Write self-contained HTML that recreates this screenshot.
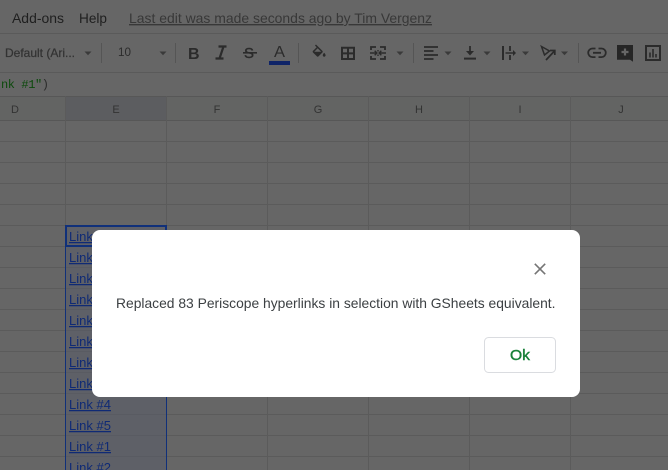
<!DOCTYPE html>
<html>
<head>
<meta charset="utf-8">
<style>
html,body{margin:0;padding:0;width:668px;height:470px;overflow:hidden;background:#666}
svg{display:block;position:absolute;left:0;top:0}
text{font-family:"Liberation Sans",sans-serif}
</style>
</head>
<body>
<svg width="668" height="470" viewBox="0 0 668 470" xmlns="http://www.w3.org/2000/svg">
<rect width="668" height="470" fill="#666666"/>

<!-- menu -->
<text x="12" y="23" font-size="14" fill="#1f1f1f" textLength="52" lengthAdjust="spacingAndGlyphs">Add-ons</text>
<text x="79" y="23" font-size="14" fill="#1f1f1f" textLength="28" lengthAdjust="spacingAndGlyphs">Help</text>
<text x="129" y="23" font-size="14" fill="#383838" textLength="303" lengthAdjust="spacingAndGlyphs" text-decoration="underline">Last edit was made seconds ago by Tim Vergenz</text>
<rect x="0" y="33" width="668" height="1" fill="#5a5a5a"/>

<!-- toolbar -->
<text x="5" y="57" font-size="12" fill="#333" stroke="#333" stroke-width=".25" textLength="70" lengthAdjust="spacingAndGlyphs">Default (Ari...</text>
<text x="118" y="56" font-size="12" fill="#2c2c2c" textLength="13" lengthAdjust="spacingAndGlyphs">10</text>
<g fill="#3a3a3a">
<path d="M84.500 51.500h7l-3.500 3.800z"/>
<path d="M159.500 51.500h7l-3.500 3.800z"/>
<path d="M396.500 51.500h7l-3.500 3.800z"/>
<path d="M444.500 51.500h7l-3.500 3.800z"/>
<path d="M483.500 51.500h7l-3.500 3.800z"/>
<path d="M522 51.500h7l-3.500 3.800z"/>
<path d="M561 51.500h7l-3.500 3.800z"/>
</g>
<g fill="#555">
<rect x="101" y="43" width="1" height="20"/>
<rect x="175" y="43" width="1" height="20"/>
<rect x="298" y="43" width="1" height="20"/>
<rect x="413" y="43" width="1" height="20"/>
<rect x="578" y="43" width="1" height="20"/>
</g>
<!-- B I S A -->
<text x="188" y="59" font-size="16" font-weight="700" fill="#2b2b2b">B</text>
<path d="M218.500 46.500h8M215.500 58.500h8M223.500 46.500l-4 12" fill="none" stroke="#2b2b2b" stroke-width="2.200"/>
<text x="244" y="58" font-size="15" fill="#2b2b2b" stroke="#2b2b2b" stroke-width=".4" textLength="12">S</text>
<rect x="243" y="52" width="14" height="1.600" fill="#2b2b2b"/>
<text x="274" y="57" font-size="16" fill="#2b2b2b" textLength="11" lengthAdjust="spacingAndGlyphs">A</text>
<rect x="269" y="61" width="21" height="4" fill="#0f2468"/>
<!-- fill bucket -->
<path transform="translate(310.500 44.500) scale(.72)" d="M16.560 8.940L7.620 0 6.210 1.410l2.380 2.380-5.150 5.150c-.59.590-.59 1.540 0 2.120l5.500 5.500c.29.290.68.440 1.060.440s.77-.150 1.060-.440l5.500-5.500c.59-.580.59-1.530 0-2.120zM5.210 10L10 5.210 14.790 10H5.210zM19 11.500s-2 2.170-2 3.500c0 1.100.9 2 2 2s2-.9 2-2c0-1.330-2-3.500-2-3.500z" fill="#2b2b2b"/>
<!-- borders -->
<path d="M342 47.700h12v11.300h-12zM348 47.700v11.300M342 53.350h12" fill="none" stroke="#2b2b2b" stroke-width="2"/>
<!-- merge -->
<path d="M376 47h-5v3M380 47h5v3M376 59h-5v-3M380 59h5v-3" fill="none" stroke="#2b2b2b" stroke-width="1.800"/>
<path d="M378 50v1.500M378 54.500v1.500" fill="none" stroke="#2b2b2b" stroke-width="1.400"/>
<path d="M370 53h6.500M374.700 50.800l2.200 2.200-2.200 2.200M386 53h-6.500M381.300 50.800l-2.200 2.200 2.200 2.200" fill="none" stroke="#2b2b2b" stroke-width="1.400"/>
<!-- align left -->
<path d="M424 47h14M424 51h9.500M424 55h14M424 59h9.500" fill="none" stroke="#2b2b2b" stroke-width="1.800"/>
<!-- valign -->
<path d="M470 46v6" fill="none" stroke="#2b2b2b" stroke-width="1.800"/>
<path d="M466 51h8l-4 4.500z" fill="#2b2b2b"/>
<path d="M464 58.600h12" fill="none" stroke="#2b2b2b" stroke-width="2"/>
<!-- wrap -->
<path d="M503 46v14" fill="none" stroke="#2b2b2b" stroke-width="2"/>
<path d="M510 46v5M510 55v5" fill="none" stroke="#2b2b2b" stroke-width="1.800"/>
<path d="M505.500 53h9" fill="none" stroke="#2b2b2b" stroke-width="1.500"/>
<path d="M513 50l3 3-3 3z" fill="#2b2b2b"/>
<!-- rotate -->
<path d="M541.500 46.500l8 4.500-5 4z" fill="none" stroke="#2b2b2b" stroke-width="1.500"/>
<path d="M546 60l8.500-9M550 50.500h4.800v4.500" fill="none" stroke="#2b2b2b" stroke-width="1.700"/>
<!-- link -->
<path d="M595.500 48.500h-3a4.300 4.300 0 0 0 0 8.600h3M598.500 48.500h3a4.300 4.300 0 0 1 0 8.600h-3M593 52.800h8" fill="none" stroke="#2b2b2b" stroke-width="1.800"/>
<!-- comment -->
<path d="M617 45h16v16.700l-3-2h-13z" fill="#262626"/>
<path d="M625 48.500v7M621.500 52h7" stroke="#666" stroke-width="2.200" fill="none"/>
<!-- chart -->
<path d="M646 46h14v14h-14z" fill="none" stroke="#2b2b2b" stroke-width="2"/>
<path d="M650 52.500v5M653 49v8.500M656 54v3.500" fill="none" stroke="#2b2b2b" stroke-width="1.600"/>
<rect x="0" y="72" width="668" height="1" fill="#5a5a5a"/>

<!-- formula bar -->
<text x="1" y="88" font-size="12" fill="#0c4a0c" style='font-family:"Liberation Mono",monospace' xml:space="preserve" textLength="48">nk #1"<tspan fill="#2b2b2b">)</tspan></text>

<!-- col headers -->
<rect x="0" y="96" width="668" height="25" fill="#636463"/>
<rect x="66" y="97" width="100" height="24" fill="#5c5d60"/>
<rect x="0" y="96" width="668" height="1" fill="#575757"/>
<rect x="0" y="120" width="668" height="1" fill="#575757"/>

<!-- grid -->
<g fill="#5b5b5b">
<rect x="0" y="141" width="668" height="1"/>
<rect x="0" y="162" width="668" height="1"/>
<rect x="0" y="183" width="668" height="1"/>
<rect x="0" y="204" width="668" height="1"/>
<rect x="0" y="225" width="668" height="1"/>
<rect x="0" y="246" width="668" height="1"/>
<rect x="0" y="267" width="668" height="1"/>
<rect x="0" y="288" width="668" height="1"/>
<rect x="0" y="309" width="668" height="1"/>
<rect x="0" y="330" width="668" height="1"/>
<rect x="0" y="351" width="668" height="1"/>
<rect x="0" y="372" width="668" height="1"/>
<rect x="0" y="393" width="668" height="1"/>
<rect x="0" y="414" width="668" height="1"/>
<rect x="0" y="435" width="668" height="1"/>
<rect x="0" y="456" width="668" height="1"/>
<rect x="65" y="96" width="1" height="374"/>
<rect x="166" y="96" width="1" height="374"/>
<rect x="267" y="96" width="1" height="374"/>
<rect x="368" y="96" width="1" height="374"/>
<rect x="469" y="96" width="1" height="374"/>
<rect x="570" y="96" width="1" height="374"/>
</g>
<g font-size="11" fill="#333" text-anchor="middle">
<text x="15" y="113">D</text>
<text x="116" y="113">E</text>
<text x="217" y="113">F</text>
<text x="318" y="113">G</text>
<text x="419" y="113">H</text>
<text x="520" y="113">I</text>
<text x="621" y="113">J</text>
</g>

<!-- selection -->
<rect x="66" y="226" width="100" height="244" fill="#5e6067"/>
<g fill="#595b62">
<rect x="66" y="246" width="100" height="1"/>
<rect x="66" y="267" width="100" height="1"/>
<rect x="66" y="288" width="100" height="1"/>
<rect x="66" y="309" width="100" height="1"/>
<rect x="66" y="330" width="100" height="1"/>
<rect x="66" y="351" width="100" height="1"/>
<rect x="66" y="372" width="100" height="1"/>
<rect x="66" y="393" width="100" height="1"/>
<rect x="66" y="414" width="100" height="1"/>
<rect x="66" y="435" width="100" height="1"/>
<rect x="66" y="456" width="100" height="1"/>
</g>
<rect x="65" y="226" width="1" height="244" fill="#10307a"/>
<rect x="166" y="226" width="1" height="244" fill="#10307a"/>
<rect x="66" y="226" width="100" height="20" fill="none" stroke="#10307a" stroke-width="2"/>
<g font-size="12.500" fill="#0f2a75" text-decoration="underline">
<text x="69" y="241" textLength="42" lengthAdjust="spacingAndGlyphs">Link #1</text>
<text x="69" y="262" textLength="42" lengthAdjust="spacingAndGlyphs">Link #2</text>
<text x="69" y="283" textLength="42" lengthAdjust="spacingAndGlyphs">Link #3</text>
<text x="69" y="304" textLength="42" lengthAdjust="spacingAndGlyphs">Link #4</text>
<text x="69" y="325" textLength="42" lengthAdjust="spacingAndGlyphs">Link #5</text>
<text x="69" y="346" textLength="42" lengthAdjust="spacingAndGlyphs">Link #1</text>
<text x="69" y="367" textLength="42" lengthAdjust="spacingAndGlyphs">Link #2</text>
<text x="69" y="388" textLength="42" lengthAdjust="spacingAndGlyphs">Link #3</text>
<text x="69" y="409" textLength="42" lengthAdjust="spacingAndGlyphs">Link #4</text>
<text x="69" y="430" textLength="42" lengthAdjust="spacingAndGlyphs">Link #5</text>
<text x="69" y="451" textLength="42" lengthAdjust="spacingAndGlyphs">Link #1</text>
<text x="69" y="472" textLength="42" lengthAdjust="spacingAndGlyphs">Link #2</text>
</g>

<!-- dialog -->
<rect x="92" y="230" width="488" height="167" rx="8" ry="8" fill="#ffffff"/>
<path d="M534.800 263.800l10.400 10.400M545.200 263.800l-10.400 10.400" fill="none" stroke="#757575" stroke-width="1.600"/>
<text x="116" y="308" font-size="14" fill="#3c4043" textLength="439.500" lengthAdjust="spacingAndGlyphs">Replaced 83 Periscope hyperlinks in selection with GSheets equivalent.</text>
<rect x="484.500" y="337.500" width="71" height="35" rx="4" ry="4" fill="#fff" stroke="#dadce0" stroke-width="1"/>
<text x="510" y="360" font-size="14.500" fill="#188038" stroke="#188038" stroke-width=".4" textLength="20" lengthAdjust="spacingAndGlyphs">Ok</text>
</svg>
</body>
</html>
